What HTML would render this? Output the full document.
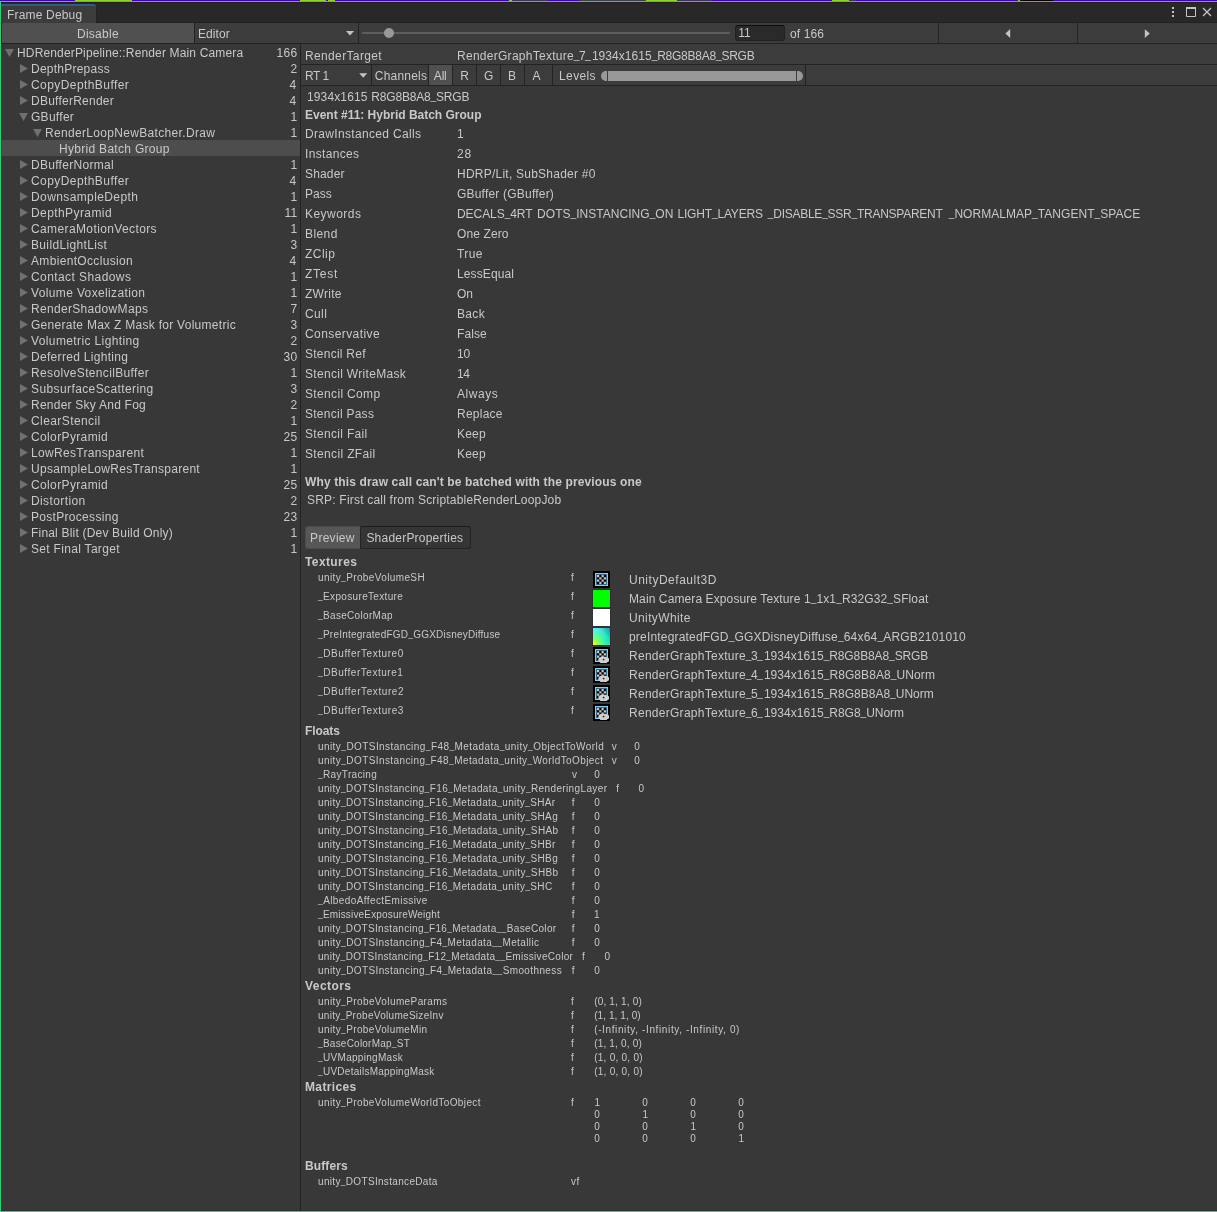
<!DOCTYPE html>
<html><head><meta charset="utf-8"><title>Frame Debug</title><style>
html,body{margin:0;padding:0;background:#383838}
body{width:1217px;height:1212px;background:#383838;position:relative;overflow:hidden;font-family:"Liberation Sans",sans-serif;color:#c8c8c8}
.a,.t,.s,svg{position:absolute}
.t{font-size:12px;line-height:16px;height:16px;white-space:pre}
.s{font-size:10px;line-height:16px;height:16px;white-space:pre}
.b{font-weight:700}
i{font-style:normal;position:relative;top:-0.6px;font-size:.85em}
.s i{top:-1.1px}
#tx{position:absolute;left:0;top:0;width:1217px;height:1212px;will-change:transform}
.ln{background:#232323}
</style></head><body>
<div class="a" style="left:0px;top:0px;width:1217px;height:1px;background:linear-gradient(90deg,#3a06b8 0 75px,#86d423 75px 132px,#3a06b8 132px 300px,#86d423 300px 326px,#3a06b8 326px 328px,#86d423 328px 335px,#3a06b8 335px 509px,#86d423 509px 512px,#38385a 512px 548px,#3a06b8 548px 580px,#36454c 580px 646px,#86d423 646px 677px,#38365c 677px 712px,#3a06b8 712px 832px,#86d423 832px 849px,#38365c 849px 856px,#3a06b8 856px 1018px,#86d423 1018px 1020px,#000 1020px 1053px,#3a06b8 1053px);"></div>
<div class="a" style="left:0px;top:1px;width:1217px;height:1px;background:#14dc7b;"></div>
<div class="a" style="left:0px;top:1px;width:1px;height:1211px;background:#14dc7b;"></div>
<div class="a" style="left:0px;top:1211px;width:1217px;height:1px;background:#14dc7b;"></div>
<div class="a" style="left:1px;top:2px;width:1216px;height:21px;background:#282828;"></div>
<div class="a" style="left:1px;top:2px;width:1216px;height:1px;background:#2a1c1e;"></div>
<div class="a" style="left:1px;top:4px;width:95px;height:19px;background:#3c3c3c;border-top:2px solid #2c5d87;box-sizing:border-box;border-radius:0 3px 0 0"></div>
<div class="a" style="left:96px;top:6px;width:1px;height:17px;background:#242424;"></div>
<div class="a" style="left:96px;top:22px;width:1121px;height:1px;background:#222222;"></div>
<div class="a" style="left:1px;top:23px;width:1216px;height:20px;background:#3c3c3c;"></div>
<div class="a" style="left:1px;top:23px;width:193px;height:20px;background:#505050;"></div>
<div class="a" style="left:1px;top:43px;width:1216px;height:1px;background:#232323;"></div>
<div class="a" style="left:194px;top:23px;width:1px;height:20px;background:#232323;"></div>
<div class="a" style="left:358px;top:23px;width:1px;height:20px;background:#232323;"></div>
<div class="a" style="left:938px;top:23px;width:1px;height:20px;background:#232323;"></div>
<div class="a" style="left:1077px;top:23px;width:1px;height:20px;background:#232323;"></div>
<div class="a" style="left:362px;top:32px;width:368px;height:2px;background:#5e5e5e;border-radius:1px"></div>
<div class="a" style="left:735px;top:25px;width:50px;height:16px;background:#2a2a2a;border:1px solid #212121;border-top-color:#0d0d0d;border-radius:3px;box-sizing:border-box"></div>
<div class="a" style="left:1px;top:140px;width:299px;height:16px;background:#4d4d4d;"></div>
<div class="a" style="left:300px;top:44px;width:1px;height:1167px;background:#232323;"></div>
<div class="a" style="left:301px;top:44px;width:916px;height:20px;background:#3c3c3c;"></div>
<div class="a" style="left:301px;top:64px;width:916px;height:1px;background:#232323;"></div>
<div class="a" style="left:301px;top:65px;width:916px;height:20px;background:#3c3c3c;"></div>
<div class="a" style="left:301px;top:85px;width:916px;height:1px;background:#232323;"></div>
<div class="a" style="left:429px;top:65px;width:23px;height:20px;background:#505050;"></div>
<div class="a" style="left:371px;top:65px;width:1px;height:20px;background:#232323;"></div>
<div class="a" style="left:428px;top:65px;width:1px;height:20px;background:#232323;"></div>
<div class="a" style="left:452px;top:65px;width:1px;height:20px;background:#232323;"></div>
<div class="a" style="left:476px;top:65px;width:1px;height:20px;background:#232323;"></div>
<div class="a" style="left:500px;top:65px;width:1px;height:20px;background:#232323;"></div>
<div class="a" style="left:524px;top:65px;width:1px;height:20px;background:#232323;"></div>
<div class="a" style="left:552px;top:65px;width:1px;height:20px;background:#232323;"></div>
<div class="a" style="left:805px;top:65px;width:1px;height:20px;background:#232323;"></div>
<div class="a" style="left:601px;top:71px;width:202px;height:10px;background:#999;border-radius:5px"></div>
<div class="a" style="left:607px;top:71px;width:1px;height:10px;background:#3c3c3c;"></div>
<div class="a" style="left:796px;top:71px;width:1px;height:10px;background:#3c3c3c;"></div>
<div class="a" style="left:360px;top:526px;width:111px;height:23px;background:#353535;border:1px solid #242424;border-top-color:#1b1b1b;border-radius:0 3px 3px 0;box-sizing:border-box"></div>
<div class="a" style="left:305px;top:526px;width:56px;height:23px;background:#575757;border:1px solid #4b4b4b;border-right-color:#242424;border-radius:3px 0 0 3px;box-sizing:border-box"></div>
<div class="a" style="left:1px;top:2px;width:1px;height:1209px;background:rgba(60,0,40,0.27);"></div>
<div class="a" style="left:1px;top:22px;width:1px;height:22px;background:#1f191c;"></div>
<div class="a" style="left:1px;top:1210px;width:1216px;height:1px;background:rgba(60,0,40,0.27);"></div>
<svg width="1217" height="1212" viewBox="0 0 1217 1212" style="left:0;top:0"><path d="M5 49L14 49L9.5 57z" fill="#707070"/>
<path d="M20 64L28 68.5L20 73z" fill="#707070"/>
<path d="M20 80L28 84.5L20 89z" fill="#707070"/>
<path d="M20 96L28 100.5L20 105z" fill="#707070"/>
<path d="M19 113L28 113L23.5 121z" fill="#707070"/>
<path d="M33 129L42 129L37.5 137z" fill="#707070"/>
<path d="M20 160L28 164.5L20 169z" fill="#707070"/>
<path d="M20 176L28 180.5L20 185z" fill="#707070"/>
<path d="M20 192L28 196.5L20 201z" fill="#707070"/>
<path d="M20 208L28 212.5L20 217z" fill="#707070"/>
<path d="M20 224L28 228.5L20 233z" fill="#707070"/>
<path d="M20 240L28 244.5L20 249z" fill="#707070"/>
<path d="M20 256L28 260.5L20 265z" fill="#707070"/>
<path d="M20 272L28 276.5L20 281z" fill="#707070"/>
<path d="M20 288L28 292.5L20 297z" fill="#707070"/>
<path d="M20 304L28 308.5L20 313z" fill="#707070"/>
<path d="M20 320L28 324.5L20 329z" fill="#707070"/>
<path d="M20 336L28 340.5L20 345z" fill="#707070"/>
<path d="M20 352L28 356.5L20 361z" fill="#707070"/>
<path d="M20 368L28 372.5L20 377z" fill="#707070"/>
<path d="M20 384L28 388.5L20 393z" fill="#707070"/>
<path d="M20 400L28 404.5L20 409z" fill="#707070"/>
<path d="M20 416L28 420.5L20 425z" fill="#707070"/>
<path d="M20 432L28 436.5L20 441z" fill="#707070"/>
<path d="M20 448L28 452.5L20 457z" fill="#707070"/>
<path d="M20 464L28 468.5L20 473z" fill="#707070"/>
<path d="M20 480L28 484.5L20 489z" fill="#707070"/>
<path d="M20 496L28 500.5L20 505z" fill="#707070"/>
<path d="M20 512L28 516.5L20 521z" fill="#707070"/>
<path d="M20 528L28 532.5L20 537z" fill="#707070"/>
<path d="M20 544L28 548.5L20 553z" fill="#707070"/>
<path d="M346 31L354 31L350 35.5z" fill="#c4c4c4"/>
<path d="M359.2 73.2L367.2 73.2L363.2 77.8z" fill="#c4c4c4"/>
<path d="M1010.2 29L1010.2 38L1005.4 33.5z" fill="#c4c4c4"/>
<path d="M1144.8 29.3L1144.8 38L1149.8 33.6z" fill="#c4c4c4"/>
<circle cx="389" cy="33" r="5" fill="#999"/>
<rect x="1172" y="7" width="2" height="2" fill="#c4c4c4"/>
<rect x="1172" y="11" width="2" height="2" fill="#c4c4c4"/>
<rect x="1172" y="15" width="2" height="2" fill="#c4c4c4"/>
<path d="M1186.5 8V16.5H1195.5V8" fill="none" stroke="#c4c4c4" stroke-width="1"/><rect x="1186" y="7" width="10" height="2" fill="#c4c4c4"/>
<path d="M1203 8L1211 16M1211 8L1203 16" stroke="#c4c4c4" stroke-width="1.3" fill="none"/>
<rect x="593" y="571" width="17" height="17" fill="#000"/><rect x="595.5" y="573.5" width="12" height="12" fill="#000" stroke="#7ecdf4" stroke-width="1"/><rect x="596.5" y="574.5" width="10" height="10" fill="#000" stroke="#2f6a88" stroke-width="1"/><rect x="597.0" y="575.0" width="2.25" height="2.25" fill="#c8c4c4"/><rect x="601.5" y="575.0" width="2.25" height="2.25" fill="#c8c4c4"/><rect x="599.25" y="577.25" width="2.25" height="2.25" fill="#c8c4c4"/><rect x="603.75" y="577.25" width="2.25" height="2.25" fill="#c8c4c4"/><rect x="597.0" y="579.5" width="2.25" height="2.25" fill="#c8c4c4"/><rect x="601.5" y="579.5" width="2.25" height="2.25" fill="#c8c4c4"/><rect x="599.25" y="581.75" width="2.25" height="2.25" fill="#c8c4c4"/><rect x="603.75" y="581.75" width="2.25" height="2.25" fill="#c8c4c4"/>
<rect x="592.5" y="589.5" width="18" height="18" fill="none" stroke="#33262f" stroke-opacity="0.45" stroke-width="1"/><rect x="593" y="590" width="17" height="17" fill="#00ff00"/>
<rect x="592.5" y="608.5" width="18" height="18" fill="none" stroke="#352b2b" stroke-opacity="0.45" stroke-width="1"/><rect x="593" y="609" width="17" height="17" fill="#ffffff"/>
<defs><linearGradient id="gr" x1="0" y1="0" x2="1" y2="0"><stop offset="0" stop-color="#5a0000"/><stop offset="0.55" stop-color="#480000"/><stop offset="1" stop-color="#000"/></linearGradient><radialGradient id="gr2" cx="0" cy="1" r="0.7"><stop offset="0" stop-color="#f00"/><stop offset="0.2" stop-color="#f00" stop-opacity="0.75"/><stop offset="0.6" stop-color="#f00" stop-opacity="0.15"/><stop offset="1" stop-color="#f00" stop-opacity="0"/></radialGradient><linearGradient id="gg" x1="0.3" y1="0.7" x2="1" y2="0"><stop offset="0" stop-color="#00ff00"/><stop offset="0.5" stop-color="#00e600"/><stop offset="1" stop-color="#009c00"/></linearGradient><linearGradient id="gb" x1="0" y1="0" x2="1" y2="0.6"><stop offset="0" stop-color="#0000ff"/><stop offset="0.5" stop-color="#0000c8"/><stop offset="1" stop-color="#0000b8"/></linearGradient><radialGradient id="gb2" cx="0" cy="1" r="0.85"><stop offset="0" stop-color="#000"/><stop offset="0.25" stop-color="#000" stop-opacity="0.8"/><stop offset="0.6" stop-color="#000" stop-opacity="0.3"/><stop offset="1" stop-color="#000" stop-opacity="0"/></radialGradient></defs>
<rect x="592.5" y="627.5" width="18" height="18" fill="none" stroke="#33262f" stroke-opacity="0.45" stroke-width="1"/><g style="isolation:isolate"><rect x="593" y="628" width="17" height="17" fill="#000"/><g style="mix-blend-mode:screen"><rect x="593" y="628" width="17" height="17" fill="url(#gr)"/><rect x="593" y="628" width="17" height="17" fill="url(#gr2)"/></g><g style="mix-blend-mode:screen"><rect x="593" y="628" width="17" height="17" fill="url(#gg)"/></g><g style="mix-blend-mode:screen"><rect x="593" y="628" width="17" height="17" fill="url(#gb)"/><rect x="593" y="628" width="17" height="17" fill="url(#gb2)"/></g></g>
<rect x="593" y="647" width="17" height="17" fill="#000"/><rect x="595.5" y="649.5" width="12" height="12" fill="#000" stroke="#7ecdf4" stroke-width="1"/><rect x="596.5" y="650.5" width="10" height="10" fill="#000" stroke="#2f6a88" stroke-width="1"/><rect x="597.0" y="651.0" width="2.25" height="2.25" fill="#c8c4c4"/><rect x="601.5" y="651.0" width="2.25" height="2.25" fill="#c8c4c4"/><rect x="599.25" y="653.25" width="2.25" height="2.25" fill="#c8c4c4"/><rect x="603.75" y="653.25" width="2.25" height="2.25" fill="#c8c4c4"/><rect x="597.0" y="655.5" width="2.25" height="2.25" fill="#c8c4c4"/><rect x="601.5" y="655.5" width="2.25" height="2.25" fill="#c8c4c4"/><rect x="599.25" y="657.75" width="2.25" height="2.25" fill="#c8c4c4"/><rect x="603.75" y="657.75" width="2.25" height="2.25" fill="#c8c4c4"/><rect x="598.4" y="657.4" width="10.6" height="4.8" rx="1.6" fill="#cfcfcf"/><rect x="600" y="656.7" width="7" height="6.4" rx="1.2" fill="#cfcfcf"/><circle cx="603.6" cy="659.5" r="0.85" fill="#111"/>
<rect x="593" y="666" width="17" height="17" fill="#000"/><rect x="595.5" y="668.5" width="12" height="12" fill="#000" stroke="#7ecdf4" stroke-width="1"/><rect x="596.5" y="669.5" width="10" height="10" fill="#000" stroke="#2f6a88" stroke-width="1"/><rect x="597.0" y="670.0" width="2.25" height="2.25" fill="#c8c4c4"/><rect x="601.5" y="670.0" width="2.25" height="2.25" fill="#c8c4c4"/><rect x="599.25" y="672.25" width="2.25" height="2.25" fill="#c8c4c4"/><rect x="603.75" y="672.25" width="2.25" height="2.25" fill="#c8c4c4"/><rect x="597.0" y="674.5" width="2.25" height="2.25" fill="#c8c4c4"/><rect x="601.5" y="674.5" width="2.25" height="2.25" fill="#c8c4c4"/><rect x="599.25" y="676.75" width="2.25" height="2.25" fill="#c8c4c4"/><rect x="603.75" y="676.75" width="2.25" height="2.25" fill="#c8c4c4"/><rect x="598.4" y="676.4" width="10.6" height="4.8" rx="1.6" fill="#cfcfcf"/><rect x="600" y="675.7" width="7" height="6.4" rx="1.2" fill="#cfcfcf"/><circle cx="603.6" cy="678.5" r="0.85" fill="#111"/>
<rect x="593" y="685" width="17" height="17" fill="#000"/><rect x="595.5" y="687.5" width="12" height="12" fill="#000" stroke="#7ecdf4" stroke-width="1"/><rect x="596.5" y="688.5" width="10" height="10" fill="#000" stroke="#2f6a88" stroke-width="1"/><rect x="597.0" y="689.0" width="2.25" height="2.25" fill="#c8c4c4"/><rect x="601.5" y="689.0" width="2.25" height="2.25" fill="#c8c4c4"/><rect x="599.25" y="691.25" width="2.25" height="2.25" fill="#c8c4c4"/><rect x="603.75" y="691.25" width="2.25" height="2.25" fill="#c8c4c4"/><rect x="597.0" y="693.5" width="2.25" height="2.25" fill="#c8c4c4"/><rect x="601.5" y="693.5" width="2.25" height="2.25" fill="#c8c4c4"/><rect x="599.25" y="695.75" width="2.25" height="2.25" fill="#c8c4c4"/><rect x="603.75" y="695.75" width="2.25" height="2.25" fill="#c8c4c4"/><rect x="598.4" y="695.4" width="10.6" height="4.8" rx="1.6" fill="#cfcfcf"/><rect x="600" y="694.7" width="7" height="6.4" rx="1.2" fill="#cfcfcf"/><circle cx="603.6" cy="697.5" r="0.85" fill="#111"/>
<rect x="593" y="704" width="17" height="17" fill="#000"/><rect x="595.5" y="706.5" width="12" height="12" fill="#000" stroke="#7ecdf4" stroke-width="1"/><rect x="596.5" y="707.5" width="10" height="10" fill="#000" stroke="#2f6a88" stroke-width="1"/><rect x="597.0" y="708.0" width="2.25" height="2.25" fill="#c8c4c4"/><rect x="601.5" y="708.0" width="2.25" height="2.25" fill="#c8c4c4"/><rect x="599.25" y="710.25" width="2.25" height="2.25" fill="#c8c4c4"/><rect x="603.75" y="710.25" width="2.25" height="2.25" fill="#c8c4c4"/><rect x="597.0" y="712.5" width="2.25" height="2.25" fill="#c8c4c4"/><rect x="601.5" y="712.5" width="2.25" height="2.25" fill="#c8c4c4"/><rect x="599.25" y="714.75" width="2.25" height="2.25" fill="#c8c4c4"/><rect x="603.75" y="714.75" width="2.25" height="2.25" fill="#c8c4c4"/><rect x="598.4" y="714.4" width="10.6" height="4.8" rx="1.6" fill="#cfcfcf"/><rect x="600" y="713.7" width="7" height="6.4" rx="1.2" fill="#cfcfcf"/><circle cx="603.6" cy="716.5" r="0.85" fill="#111"/></svg>
<div id="tx">
<span class="t" style="left:7.0px;top:7px;letter-spacing:0.175px">Frame Debug</span>
<span class="t" style="left:77.0px;top:26px;letter-spacing:0.263px">Disable</span>
<span class="t" style="left:198.0px;top:26px;letter-spacing:0.060px">Editor</span>
<span class="t" style="left:738.3px;top:25px">11</span>
<span class="t" style="left:790.0px;top:26px;letter-spacing:0.105px">of 166</span>
<span class="t" style="left:17.0px;top:45px;letter-spacing:0.153px">HDRenderPipeline::Render Main Camera</span>
<span class="t" style="left:237.5px;width:60px;text-align:right;top:45px;letter-spacing:0.3px">166</span>
<span class="t" style="left:31.0px;top:61px;letter-spacing:0.241px">DepthPrepass</span>
<span class="t" style="left:237.2px;width:60px;text-align:right;top:61px">2</span>
<span class="t" style="left:31.0px;top:77px;letter-spacing:0.425px">CopyDepthBuffer</span>
<span class="t" style="left:236.3px;width:60px;text-align:right;top:77px">4</span>
<span class="t" style="left:31.0px;top:93px;letter-spacing:0.246px">DBufferRender</span>
<span class="t" style="left:236.3px;width:60px;text-align:right;top:93px">4</span>
<span class="t" style="left:31.0px;top:109px;letter-spacing:0.283px">GBuffer</span>
<span class="t" style="left:237.2px;width:60px;text-align:right;top:109px">1</span>
<span class="t" style="left:45.0px;top:125px;letter-spacing:0.325px">RenderLoopNewBatcher.Draw</span>
<span class="t" style="left:237.2px;width:60px;text-align:right;top:125px">1</span>
<span class="t" style="left:59.0px;top:141px;letter-spacing:0.296px">Hybrid Batch Group</span>
<span class="t" style="left:31.0px;top:157px;letter-spacing:0.288px">DBufferNormal</span>
<span class="t" style="left:237.2px;width:60px;text-align:right;top:157px">1</span>
<span class="t" style="left:31.0px;top:173px;letter-spacing:0.425px">CopyDepthBuffer</span>
<span class="t" style="left:236.3px;width:60px;text-align:right;top:173px">4</span>
<span class="t" style="left:31.0px;top:189px;letter-spacing:0.395px">DownsampleDepth</span>
<span class="t" style="left:237.2px;width:60px;text-align:right;top:189px">1</span>
<span class="t" style="left:31.0px;top:205px;letter-spacing:0.416px">DepthPyramid</span>
<span class="t" style="left:237.5px;width:60px;text-align:right;top:205px;letter-spacing:0.3px">11</span>
<span class="t" style="left:31.0px;top:221px;letter-spacing:0.383px">CameraMotionVectors</span>
<span class="t" style="left:237.2px;width:60px;text-align:right;top:221px">1</span>
<span class="t" style="left:31.0px;top:237px;letter-spacing:0.348px">BuildLightList</span>
<span class="t" style="left:237.2px;width:60px;text-align:right;top:237px">3</span>
<span class="t" style="left:31.0px;top:253px;letter-spacing:0.335px">AmbientOcclusion</span>
<span class="t" style="left:236.3px;width:60px;text-align:right;top:253px">4</span>
<span class="t" style="left:31.0px;top:269px;letter-spacing:0.418px">Contact Shadows</span>
<span class="t" style="left:237.2px;width:60px;text-align:right;top:269px">1</span>
<span class="t" style="left:31.0px;top:285px;letter-spacing:0.363px">Volume Voxelization</span>
<span class="t" style="left:237.2px;width:60px;text-align:right;top:285px">1</span>
<span class="t" style="left:31.0px;top:301px;letter-spacing:0.323px">RenderShadowMaps</span>
<span class="t" style="left:237.2px;width:60px;text-align:right;top:301px">7</span>
<span class="t" style="left:31.0px;top:317px;letter-spacing:0.280px">Generate Max Z Mask for Volumetric</span>
<span class="t" style="left:237.2px;width:60px;text-align:right;top:317px">3</span>
<span class="t" style="left:31.0px;top:333px;letter-spacing:0.381px">Volumetric Lighting</span>
<span class="t" style="left:237.2px;width:60px;text-align:right;top:333px">2</span>
<span class="t" style="left:31.0px;top:349px;letter-spacing:0.309px">Deferred Lighting</span>
<span class="t" style="left:237.5px;width:60px;text-align:right;top:349px;letter-spacing:0.3px">30</span>
<span class="t" style="left:31.0px;top:365px;letter-spacing:0.347px">ResolveStencilBuffer</span>
<span class="t" style="left:237.2px;width:60px;text-align:right;top:365px">1</span>
<span class="t" style="left:31.0px;top:381px;letter-spacing:0.396px">SubsurfaceScattering</span>
<span class="t" style="left:237.2px;width:60px;text-align:right;top:381px">3</span>
<span class="t" style="left:31.0px;top:397px;letter-spacing:0.237px">Render Sky And Fog</span>
<span class="t" style="left:237.2px;width:60px;text-align:right;top:397px">2</span>
<span class="t" style="left:31.0px;top:413px;letter-spacing:0.411px">ClearStencil</span>
<span class="t" style="left:237.2px;width:60px;text-align:right;top:413px">1</span>
<span class="t" style="left:31.0px;top:429px;letter-spacing:0.366px">ColorPyramid</span>
<span class="t" style="left:237.5px;width:60px;text-align:right;top:429px;letter-spacing:0.3px">25</span>
<span class="t" style="left:31.0px;top:445px;letter-spacing:0.322px">LowResTransparent</span>
<span class="t" style="left:237.2px;width:60px;text-align:right;top:445px">1</span>
<span class="t" style="left:31.0px;top:461px;letter-spacing:0.294px">UpsampleLowResTransparent</span>
<span class="t" style="left:237.2px;width:60px;text-align:right;top:461px">1</span>
<span class="t" style="left:31.0px;top:477px;letter-spacing:0.366px">ColorPyramid</span>
<span class="t" style="left:237.5px;width:60px;text-align:right;top:477px;letter-spacing:0.3px">25</span>
<span class="t" style="left:31.0px;top:493px;letter-spacing:0.392px">Distortion</span>
<span class="t" style="left:237.2px;width:60px;text-align:right;top:493px">2</span>
<span class="t" style="left:31.0px;top:509px;letter-spacing:0.304px">PostProcessing</span>
<span class="t" style="left:237.5px;width:60px;text-align:right;top:509px;letter-spacing:0.3px">23</span>
<span class="t" style="left:31.0px;top:525px;letter-spacing:0.193px">Final Blit (Dev Build Only)</span>
<span class="t" style="left:237.2px;width:60px;text-align:right;top:525px">1</span>
<span class="t" style="left:31.0px;top:541px;letter-spacing:0.310px">Set Final Target</span>
<span class="t" style="left:237.2px;width:60px;text-align:right;top:541px">1</span>
<span class="t" style="left:305.0px;top:48px;letter-spacing:0.359px">RenderTarget</span>
<span class="t" style="left:457.0px;top:48px;letter-spacing:0.274px">RenderGraphTexture</span><span class="t" style="left:573.8px;top:48px;letter-spacing:-0.550px"><i>_</i>7<i>_</i></span><span class="t" style="left:591.9px;top:48px;letter-spacing:0.041px">1934x1615</span><span class="t" style="left:651.7px;top:48px;letter-spacing:-0.235px"><i>_</i>R8G8B8A8<i>_</i>SRGB</span>
<span class="t" style="left:305.0px;top:68px;letter-spacing:-0.475px">RT 1</span>
<span class="t" style="left:374.8px;top:68px;letter-spacing:0.207px">Channels</span>
<span class="t" style="left:433.8px;top:68px;letter-spacing:-0.175px">All</span>
<span class="t" style="left:460.2px;top:68px">R</span>
<span class="t" style="left:484.1px;top:68px">G</span>
<span class="t" style="left:508.1px;top:68px">B</span>
<span class="t" style="left:532.6px;top:68px">A</span>
<span class="t" style="left:559.1px;top:68px;letter-spacing:0.345px">Levels</span>
<span class="t" style="left:307.0px;top:89px;letter-spacing:0.128px">1934x1615</span>
<span class="t" style="left:371.3px;top:89px;letter-spacing:-0.188px">R8G8B8A8<i>_</i>SRGB</span>
<span class="t b" style="left:305.0px;top:107px;letter-spacing:-0.008px">Event #11: Hybrid Batch Group</span>
<span class="t" style="left:305.0px;top:126px;letter-spacing:0.331px">DrawInstanced Calls</span>
<span class="t" style="left:457.0px;top:126px">1</span>
<span class="t" style="left:305.0px;top:146px;letter-spacing:0.328px">Instances</span>
<span class="t" style="left:457.0px;top:146px;letter-spacing:0.725px">28</span>
<span class="t" style="left:305.0px;top:166px;letter-spacing:0.150px">Shader</span>
<span class="t" style="left:457.0px;top:166px;letter-spacing:0.235px">HDRP/Lit, SubShader #0</span>
<span class="t" style="left:305.0px;top:186px;letter-spacing:0.033px">Pass</span>
<span class="t" style="left:457.0px;top:186px;letter-spacing:0.202px">GBuffer (GBuffer)</span>
<span class="t" style="left:305.0px;top:206px;letter-spacing:0.457px">Keywords</span>
<span class="t" style="left:305.0px;top:226px;letter-spacing:0.406px">Blend</span>
<span class="t" style="left:457.0px;top:226px;letter-spacing:0.121px">One Zero</span>
<span class="t" style="left:305.0px;top:246px;letter-spacing:0.463px">ZClip</span>
<span class="t" style="left:457.0px;top:246px;letter-spacing:0.417px">True</span>
<span class="t" style="left:305.0px;top:266px;letter-spacing:0.731px">ZTest</span>
<span class="t" style="left:457.0px;top:266px;letter-spacing:0.109px">LessEqual</span>
<span class="t" style="left:305.0px;top:286px;letter-spacing:0.270px">ZWrite</span>
<span class="t" style="left:457.0px;top:286px;letter-spacing:-0.050px">On</span>
<span class="t" style="left:305.0px;top:306px;letter-spacing:0.375px">Cull</span>
<span class="t" style="left:457.0px;top:306px;letter-spacing:0.317px">Back</span>
<span class="t" style="left:305.0px;top:326px;letter-spacing:0.416px">Conservative</span>
<span class="t" style="left:457.0px;top:326px;letter-spacing:0.081px">False</span>
<span class="t" style="left:305.0px;top:346px;letter-spacing:0.248px">Stencil Ref</span>
<span class="t" style="left:457.0px;top:346px;letter-spacing:-0.275px">10</span>
<span class="t" style="left:305.0px;top:366px;letter-spacing:0.309px">Stencil WriteMask</span>
<span class="t" style="left:457.0px;top:366px;letter-spacing:-0.400px">14</span>
<span class="t" style="left:305.0px;top:386px;letter-spacing:0.339px">Stencil Comp</span>
<span class="t" style="left:457.0px;top:386px;letter-spacing:0.550px">Always</span>
<span class="t" style="left:305.0px;top:406px;letter-spacing:0.259px">Stencil Pass</span>
<span class="t" style="left:457.0px;top:406px;letter-spacing:0.246px">Replace</span>
<span class="t" style="left:305.0px;top:426px;letter-spacing:0.320px">Stencil Fail</span>
<span class="t" style="left:457.0px;top:426px;letter-spacing:0.217px">Keep</span>
<span class="t" style="left:305.0px;top:446px;letter-spacing:0.348px">Stencil ZFail</span>
<span class="t" style="left:457.0px;top:446px;letter-spacing:0.217px">Keep</span>
<span class="t" style="left:457.0px;top:206px;letter-spacing:-0.064px">DECALS<i>_</i>4RT</span>
<span class="t" style="left:537.1px;top:206px;letter-spacing:0.026px">DOTS<i>_</i>INSTANCING<i>_</i>ON</span>
<span class="t" style="left:677.4px;top:206px;letter-spacing:-0.168px">LIGHT<i>_</i>LAYERS</span>
<span class="t" style="left:767.8px;top:206px;letter-spacing:-0.255px"><i>_</i>DISABLE<i>_</i>SSR<i>_</i>TRANSPARENT</span>
<span class="t" style="left:948.7px;top:206px;letter-spacing:0.039px"><i>_</i>NORMALMAP<i>_</i>TANGENT<i>_</i>SPACE</span>
<span class="t b" style="left:305.0px;top:474px;letter-spacing:0.138px">Why this draw call can&#x27;t be batched with the previous one</span>
<span class="t" style="left:307.0px;top:492px;letter-spacing:0.203px">SRP: First call from ScriptableRenderLoopJob</span>
<span class="t" style="left:310.1px;top:530px;letter-spacing:0.279px">Preview</span>
<span class="t" style="left:366.4px;top:530px;letter-spacing:0.218px">ShaderProperties</span>
<span class="t b" style="left:305.0px;top:554px;letter-spacing:0.393px">Textures</span>
<span class="s" style="left:318.0px;top:570px;letter-spacing:0.379px">unity<i>_</i>ProbeVolumeSH</span>
<span class="s" style="left:571.0px;top:570px">f</span>
<span class="t" style="left:629.0px;top:572px;letter-spacing:0.515px">UnityDefault3D</span>
<span class="s" style="left:318.0px;top:589px;letter-spacing:0.338px"><i>_</i>ExposureTexture</span>
<span class="s" style="left:571.0px;top:589px">f</span>
<span class="t" style="left:629.0px;top:591px;letter-spacing:0.105px">Main Camera Exposure Texture 1<i>_</i>1x1<i>_</i>R32G32<i>_</i>SFloat</span>
<span class="s" style="left:318.0px;top:608px;letter-spacing:0.312px"><i>_</i>BaseColorMap</span>
<span class="s" style="left:571.0px;top:608px">f</span>
<span class="t" style="left:629.0px;top:610px;letter-spacing:0.375px">UnityWhite</span>
<span class="s" style="left:318.0px;top:627px;letter-spacing:0.220px"><i>_</i>PreIntegratedFGD<i>_</i>GGXDisneyDiffuse</span>
<span class="s" style="left:571.0px;top:627px">f</span>
<span class="t" style="left:629.0px;top:629px;letter-spacing:0.182px">preIntegratedFGD<i>_</i>GGXDisneyDiffuse<i>_</i>64x64<i>_</i>ARGB2101010</span>
<span class="s" style="left:318.0px;top:646px;letter-spacing:0.563px"><i>_</i>DBufferTexture0</span>
<span class="s" style="left:571.0px;top:646px">f</span>
<span class="t" style="left:629.0px;top:648px;letter-spacing:0.274px">RenderGraphTexture</span><span class="t" style="left:745.8px;top:648px;letter-spacing:-0.550px"><i>_</i>3<i>_</i></span><span class="t" style="left:763.9px;top:648px;letter-spacing:0.041px">1934x1615</span><span class="t" style="left:823.7px;top:648px;letter-spacing:-0.112px"><i>_</i>R8G8B8A8<i>_</i>SRGB</span>
<span class="s" style="left:318.0px;top:665px;letter-spacing:0.538px"><i>_</i>DBufferTexture1</span>
<span class="s" style="left:571.0px;top:665px">f</span>
<span class="t" style="left:629.0px;top:667px;letter-spacing:0.274px">RenderGraphTexture</span><span class="t" style="left:745.8px;top:667px;letter-spacing:-0.550px"><i>_</i>4<i>_</i></span><span class="t" style="left:763.9px;top:667px;letter-spacing:0.041px">1934x1615</span><span class="t" style="left:823.7px;top:667px;letter-spacing:0.084px"><i>_</i>R8G8B8A8<i>_</i>UNorm</span>
<span class="s" style="left:318.0px;top:684px;letter-spacing:0.580px"><i>_</i>DBufferTexture2</span>
<span class="s" style="left:571.0px;top:684px">f</span>
<span class="t" style="left:629.0px;top:686px;letter-spacing:0.274px">RenderGraphTexture</span><span class="t" style="left:745.8px;top:686px;letter-spacing:-0.550px"><i>_</i>5<i>_</i></span><span class="t" style="left:763.9px;top:686px;letter-spacing:0.041px">1934x1615</span><span class="t" style="left:823.7px;top:686px;letter-spacing:0.005px"><i>_</i>R8G8B8A8<i>_</i>UNorm</span>
<span class="s" style="left:318.0px;top:703px;letter-spacing:0.572px"><i>_</i>DBufferTexture3</span>
<span class="s" style="left:571.0px;top:703px">f</span>
<span class="t" style="left:629.0px;top:705px;letter-spacing:0.274px">RenderGraphTexture</span><span class="t" style="left:745.8px;top:705px;letter-spacing:-0.550px"><i>_</i>6<i>_</i></span><span class="t" style="left:763.9px;top:705px;letter-spacing:0.041px">1934x1615</span><span class="t" style="left:823.7px;top:705px;letter-spacing:-0.030px"><i>_</i>R8G8<i>_</i>UNorm</span>
<span class="t b" style="left:305.0px;top:723px;letter-spacing:-0.075px">Floats</span>
<span class="s" style="left:318.0px;top:739px;letter-spacing:0.425px">unity<i>_</i>DOTSInstancing<i>_</i>F48<i>_</i>Metadata<i>_</i>unity<i>_</i>ObjectToWorld</span>
<span class="s" style="left:611.8px;top:739px">v</span>
<span class="s" style="left:634.2px;top:739px">0</span>
<span class="s" style="left:318.0px;top:753px;letter-spacing:0.411px">unity<i>_</i>DOTSInstancing<i>_</i>F48<i>_</i>Metadata<i>_</i>unity<i>_</i>WorldToObject</span>
<span class="s" style="left:611.8px;top:753px">v</span>
<span class="s" style="left:634.2px;top:753px">0</span>
<span class="s" style="left:318.0px;top:767px;letter-spacing:0.332px"><i>_</i>RayTracing</span>
<span class="s" style="left:571.9px;top:767px">v</span>
<span class="s" style="left:594.2px;top:767px">0</span>
<span class="s" style="left:318.0px;top:781px;letter-spacing:0.369px">unity<i>_</i>DOTSInstancing<i>_</i>F16<i>_</i>Metadata<i>_</i>unity<i>_</i>RenderingLayer</span>
<span class="s" style="left:616.2px;top:781px">f</span>
<span class="s" style="left:638.5px;top:781px">0</span>
<span class="s" style="left:318.0px;top:795px;letter-spacing:0.349px">unity<i>_</i>DOTSInstancing<i>_</i>F16<i>_</i>Metadata<i>_</i>unity<i>_</i>SHAr</span>
<span class="s" style="left:571.8px;top:795px">f</span>
<span class="s" style="left:594.2px;top:795px">0</span>
<span class="s" style="left:318.0px;top:809px;letter-spacing:0.356px">unity<i>_</i>DOTSInstancing<i>_</i>F16<i>_</i>Metadata<i>_</i>unity<i>_</i>SHAg</span>
<span class="s" style="left:571.8px;top:809px">f</span>
<span class="s" style="left:594.2px;top:809px">0</span>
<span class="s" style="left:318.0px;top:823px;letter-spacing:0.366px">unity<i>_</i>DOTSInstancing<i>_</i>F16<i>_</i>Metadata<i>_</i>unity<i>_</i>SHAb</span>
<span class="s" style="left:571.8px;top:823px">f</span>
<span class="s" style="left:594.2px;top:823px">0</span>
<span class="s" style="left:318.0px;top:837px;letter-spacing:0.352px">unity<i>_</i>DOTSInstancing<i>_</i>F16<i>_</i>Metadata<i>_</i>unity<i>_</i>SHBr</span>
<span class="s" style="left:571.8px;top:837px">f</span>
<span class="s" style="left:594.2px;top:837px">0</span>
<span class="s" style="left:318.0px;top:851px;letter-spacing:0.356px">unity<i>_</i>DOTSInstancing<i>_</i>F16<i>_</i>Metadata<i>_</i>unity<i>_</i>SHBg</span>
<span class="s" style="left:571.8px;top:851px">f</span>
<span class="s" style="left:594.2px;top:851px">0</span>
<span class="s" style="left:318.0px;top:865px;letter-spacing:0.366px">unity<i>_</i>DOTSInstancing<i>_</i>F16<i>_</i>Metadata<i>_</i>unity<i>_</i>SHBb</span>
<span class="s" style="left:571.8px;top:865px">f</span>
<span class="s" style="left:594.2px;top:865px">0</span>
<span class="s" style="left:318.0px;top:879px;letter-spacing:0.351px">unity<i>_</i>DOTSInstancing<i>_</i>F16<i>_</i>Metadata<i>_</i>unity<i>_</i>SHC</span>
<span class="s" style="left:571.8px;top:879px">f</span>
<span class="s" style="left:594.2px;top:879px">0</span>
<span class="s" style="left:318.0px;top:893px;letter-spacing:0.401px"><i>_</i>AlbedoAffectEmissive</span>
<span class="s" style="left:571.8px;top:893px">f</span>
<span class="s" style="left:594.2px;top:893px">0</span>
<span class="s" style="left:318.0px;top:907px;letter-spacing:0.174px"><i>_</i>EmissiveExposureWeight</span>
<span class="s" style="left:571.8px;top:907px">f</span>
<span class="s" style="left:593.9px;top:907px">1</span>
<span class="s" style="left:318.0px;top:921px;letter-spacing:0.334px">unity<i>_</i>DOTSInstancing<i>_</i>F16<i>_</i>Metadata<i>_</i><i>_</i>BaseColor</span>
<span class="s" style="left:571.8px;top:921px">f</span>
<span class="s" style="left:594.2px;top:921px">0</span>
<span class="s" style="left:318.0px;top:935px;letter-spacing:0.380px">unity<i>_</i>DOTSInstancing<i>_</i>F4<i>_</i>Metadata<i>_</i><i>_</i>Metallic</span>
<span class="s" style="left:571.8px;top:935px">f</span>
<span class="s" style="left:594.2px;top:935px">0</span>
<span class="s" style="left:318.0px;top:949px;letter-spacing:0.294px">unity<i>_</i>DOTSInstancing<i>_</i>F12<i>_</i>Metadata<i>_</i><i>_</i>EmissiveColor</span>
<span class="s" style="left:581.9px;top:949px">f</span>
<span class="s" style="left:604.5px;top:949px">0</span>
<span class="s" style="left:318.0px;top:963px;letter-spacing:0.384px">unity<i>_</i>DOTSInstancing<i>_</i>F4<i>_</i>Metadata<i>_</i><i>_</i>Smoothness</span>
<span class="s" style="left:571.8px;top:963px">f</span>
<span class="s" style="left:594.2px;top:963px">0</span>
<span class="t b" style="left:305.0px;top:978px;letter-spacing:0.438px">Vectors</span>
<span class="s" style="left:318.0px;top:994px;letter-spacing:0.392px">unity<i>_</i>ProbeVolumeParams</span>
<span class="s" style="left:571.0px;top:994px">f</span>
<span class="s" style="left:594.2px;top:994px;letter-spacing:0.180px">(0, 1, 1, 0)</span>
<span class="s" style="left:318.0px;top:1008px;letter-spacing:0.293px">unity<i>_</i>ProbeVolumeSizeInv</span>
<span class="s" style="left:571.0px;top:1008px">f</span>
<span class="s" style="left:594.2px;top:1008px;letter-spacing:0.080px">(1, 1, 1, 0)</span>
<span class="s" style="left:318.0px;top:1022px;letter-spacing:0.376px">unity<i>_</i>ProbeVolumeMin</span>
<span class="s" style="left:571.0px;top:1022px">f</span>
<span class="s" style="left:594.2px;top:1022px;letter-spacing:0.625px">(-Infinity, -Infinity, -Infinity, 0)</span>
<span class="s" style="left:318.0px;top:1036px;letter-spacing:0.225px"><i>_</i>BaseColorMap<i>_</i>ST</span>
<span class="s" style="left:571.0px;top:1036px">f</span>
<span class="s" style="left:594.2px;top:1036px;letter-spacing:0.180px">(1, 1, 0, 0)</span>
<span class="s" style="left:318.0px;top:1050px;letter-spacing:0.294px"><i>_</i>UVMappingMask</span>
<span class="s" style="left:571.0px;top:1050px">f</span>
<span class="s" style="left:594.2px;top:1050px;letter-spacing:0.252px">(1, 0, 0, 0)</span>
<span class="s" style="left:318.0px;top:1064px;letter-spacing:0.245px"><i>_</i>UVDetailsMappingMask</span>
<span class="s" style="left:571.0px;top:1064px">f</span>
<span class="s" style="left:594.2px;top:1064px;letter-spacing:0.252px">(1, 0, 0, 0)</span>
<span class="t b" style="left:305.0px;top:1079px;letter-spacing:0.368px">Matrices</span>
<span class="s" style="left:318.0px;top:1095px;letter-spacing:0.387px">unity<i>_</i>ProbeVolumeWorldToObject</span>
<span class="s" style="left:571.0px;top:1095px">f</span>
<span class="s" style="left:594.4px;top:1095px">1</span>
<span class="s" style="left:642.2px;top:1095px">0</span>
<span class="s" style="left:690.2px;top:1095px">0</span>
<span class="s" style="left:738.2px;top:1095px">0</span>
<span class="s" style="left:594.2px;top:1107px">0</span>
<span class="s" style="left:642.4px;top:1107px">1</span>
<span class="s" style="left:690.2px;top:1107px">0</span>
<span class="s" style="left:738.2px;top:1107px">0</span>
<span class="s" style="left:594.2px;top:1119px">0</span>
<span class="s" style="left:642.2px;top:1119px">0</span>
<span class="s" style="left:690.4px;top:1119px">1</span>
<span class="s" style="left:738.2px;top:1119px">0</span>
<span class="s" style="left:594.2px;top:1131px">0</span>
<span class="s" style="left:642.2px;top:1131px">0</span>
<span class="s" style="left:690.2px;top:1131px">0</span>
<span class="s" style="left:738.4px;top:1131px">1</span>
<span class="t b" style="left:305.0px;top:1158px;letter-spacing:0.125px">Buffers</span>
<span class="s" style="left:318.0px;top:1174px;letter-spacing:0.323px">unity<i>_</i>DOTSInstanceData</span>
<span class="s" style="left:571.0px;top:1174px;letter-spacing:0.550px">vf</span>
</div>
</body></html>
